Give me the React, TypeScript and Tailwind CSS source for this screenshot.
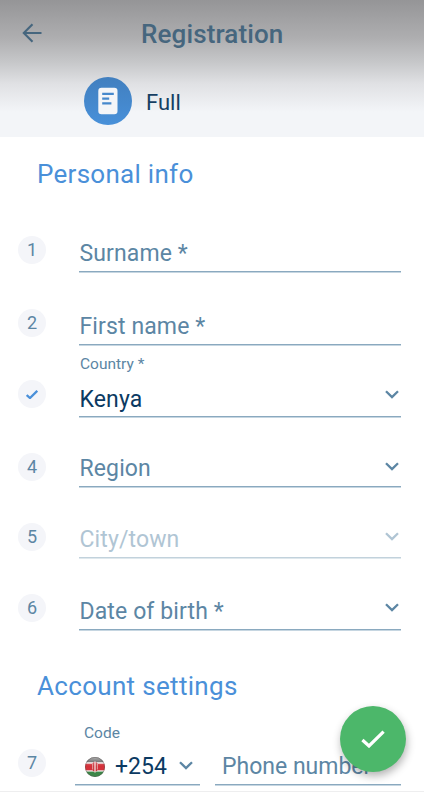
import { ReactNode } from "react";

function Chevron({ className = "" }: { className?: string }) {
  return (
    <svg width="14" height="9" viewBox="0 0 14 9" fill="none" className={className}>
      <path d="M1 1.2 7 7.1 13 1.2" stroke="currentColor" strokeWidth="2.3" />
    </svg>
  );
}

function Check({ className = "", weight = 3 }: { className?: string; weight?: number }) {
  return (
    <svg viewBox="0 0 24 18" fill="none" className={className}>
      <path d="M1.4 10 8 16 22.6 1.6" stroke="currentColor" strokeWidth={weight} />
    </svg>
  );
}

function KenyaFlag() {
  return (
    <svg width="20" height="20" viewBox="0 0 20 20">
      <defs>
        <clipPath id="flag">
          <circle cx="10" cy="10" r="10" />
        </clipPath>
        <linearGradient id="gloss" x1="0" y1="0" x2="0" y2="1">
          <stop offset="0" stopColor="#fff" stopOpacity="0.6" />
          <stop offset="0.45" stopColor="#fff" stopOpacity="0.08" />
          <stop offset="1" stopColor="#fff" stopOpacity="0.1" />
        </linearGradient>
      </defs>
      <g clipPath="url(#flag)">
        <rect width="20" height="20" fill="#f2f0ef" />
        <rect width="20" height="5.2" fill="#3a3a3a" />
        <rect y="6.7" width="20" height="6.6" fill="#d01f29" />
        <rect y="14.6" width="20" height="5.4" fill="#287a35" />
        <ellipse cx="10" cy="9.8" rx="3.2" ry="5" fill="#c4232b" />
        <path d="M10 4.5v11" stroke="#f7dedc" strokeWidth="1.3" />
        <path d="M7.6 6.5v6M12.4 6.5v6" stroke="#eab3b0" strokeWidth="0.8" />
        <rect width="20" height="20" fill="url(#gloss)" />
      </g>
      <circle cx="10" cy="10" r="9.6" fill="none" stroke="#55504f" strokeOpacity="0.5" strokeWidth="0.8" />
    </svg>
  );
}

type RowProps = {
  badge: ReactNode;
  className: string;
  badgeClass?: string;
  children: ReactNode;
};

function Row({ badge, className, badgeClass = "mb-2", children }: RowProps) {
  return (
    <div className={`flex items-end pl-[18px] pr-[23px] ${className}`}>
      <div
        className={`flex size-7 shrink-0 items-center justify-center rounded-full bg-[#f4f5f9] text-[18px] leading-7 text-[#5c86a4] ${badgeClass}`}
      >
        {badge}
      </div>
      {children}
    </div>
  );
}

type FieldProps = {
  text: string;
  label?: string;
  select?: boolean;
  filled?: boolean;
  disabled?: boolean;
  textClass?: string;
  chevronClass?: string;
};

function Field({ text, label, select, filled, disabled, textClass = "pb-[3px]", chevronClass = "mt-[5px]" }: FieldProps) {
  return (
    <div
      className={`ml-[33px] flex-1 border-b ${
        disabled
          ? "border-[#c2d2dc] text-[#b0c5d4] shadow-[0_1px_0_#dfe8ed]"
          : "border-[#8aa9bf] text-[#5c86a4] shadow-[0_1px_0_#c6d6e1]"
      }`}
    >
      {label && <div className="mb-[12px] ml-px text-[15.5px] leading-5">{label}</div>}
      <div className="flex items-start justify-between pr-[2px]">
        <span
          className={`ml-[0.5px] text-[23px] leading-7 tracking-[0.12px] ${textClass} ${filled ? "text-[#0b3a62]" : ""}`}
        >
          {text}
        </span>
        {select && <Chevron className={chevronClass} />}
      </div>
    </div>
  );
}

export default function App() {
  return (
    <div className="relative h-[792px] w-[424px] overflow-hidden bg-white font-['Roboto',sans-serif]">
      <header className="h-[137px] bg-[linear-gradient(to_bottom,#959597_0px,#aeaeb0_38px,#c6c7c9_62px,#e0e1e4_84px,#f3f5f8_112px)]">
        <div className="flex h-[68px] items-center">
          <svg width="20" height="20" viewBox="0 0 20 20" fill="none" className="-mt-[2px] ml-[22px]">
            <path d="M19.5 10H2M10.5 1.2 1.8 10l8.7 8.8" stroke="#46667e" strokeWidth="2.1" />
          </svg>
          <h1 className="ml-[99px] text-[26px] font-medium leading-8 tracking-[0.12px] text-[#46667e]">Registration</h1>
        </div>
        <div className="ml-[84px] mt-[9px] flex items-center">
          <div className="flex size-12 items-center justify-center rounded-full bg-linear-to-b from-[#417fbf] to-[#4890d9]">
            <svg width="20" height="28" viewBox="0 0 20 28" fill="none">
              <rect x="0.3" y="0.8" width="19.2" height="26.4" rx="3.2" fill="#f4f5f8" />
              <path d="M4.2 6.8h11.6M4.2 11.6h7M4.2 16.4h9.2" stroke="#4688cc" strokeWidth="2.3" />
            </svg>
          </div>
          <span className="ml-[14px] mt-[3px] text-[22px] leading-7 text-[#153f63]">Full</span>
        </div>
      </header>

      <main>
        <h2 className="ml-[37px] mt-[21px] text-[26px] leading-8 tracking-[0.28px] text-[#4a90d9]">Personal info</h2>
        <Row badge="1" className="h-[82px]">
          <Field text="Surname *" />
        </Row>
        <Row badge="2" className="h-[73px]">
          <Field text="First name *" />
        </Row>
        <Row
          badge={<Check className="w-3 text-[#4a90d9]" weight={4.6} />}
          className="h-[72px]"
          badgeClass="mb-[9px]"
        >
          <Field label="Country *" text="Kenya" select filled textClass="pb-[2px]" chevronClass="mt-1" />
        </Row>
        <Row badge="4" className="h-[70px]" badgeClass="mb-[6px]">
          <Field text="Region" select chevronClass="mt-[7px]" />
        </Row>
        <Row badge="5" className="h-[71px]" badgeClass="mb-[7px]">
          <Field text="City/town" select disabled chevronClass="mt-[6px]" />
        </Row>
        <Row badge="6" className="h-[72px]">
          <Field text="Date of birth *" select />
        </Row>

        <h2 className="ml-[37px] mt-[40px] text-[26px] leading-8 tracking-[0.32px] text-[#4a90d9]">
          Account settings
        </h2>
        <Row badge="7" className="h-[83px]">
          <div className="ml-[29px] w-[125px] border-b border-[#8aa9bf] text-[#5c86a4] shadow-[0_1px_0_#c6d6e1]">
            <div className="mb-[10px] ml-[9px] text-[15.5px] leading-5">Code</div>
            <div className="flex items-center pb-[3px] pl-[10px]">
              <KenyaFlag />
              <span className="ml-[10px] text-[23px] leading-7 text-[#0b3a62]">+254</span>
              <Chevron className="-mt-[3px] ml-3" />
            </div>
          </div>
          <div className="ml-[15px] flex-1 border-b border-[#8aa9bf] pb-[3px] pl-[7px] text-[23px] leading-7 text-[#5c86a4] shadow-[0_1px_0_#c6d6e1]">
            Phone number
          </div>
        </Row>
        <div className="mt-[6px] h-px bg-[#eeeeef]" />
      </main>

      <button className="absolute left-[340px] top-[706px] flex size-[66px] items-center justify-center rounded-full bg-[#4cb76a] text-white shadow-[1px_4px_8px_rgba(0,0,0,0.3)]">
        <Check className="w-6" weight={3.2} />
      </button>
    </div>
  );
}
